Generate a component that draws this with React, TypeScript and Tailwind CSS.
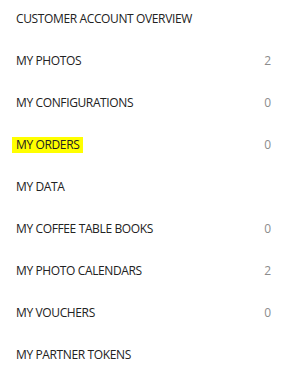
import React from "react";

const items: { label: string; count?: number; highlight?: boolean }[] = [
  { label: "CUSTOMER ACCOUNT OVERVIEW" },
  { label: "MY PHOTOS", count: 2 },
  { label: "MY CONFIGURATIONS", count: 0 },
  { label: "MY ORDERS", count: 0, highlight: true },
  { label: "MY DATA" },
  { label: "MY COFFEE TABLE BOOKS", count: 0 },
  { label: "MY PHOTO CALENDARS", count: 2 },
  { label: "MY VOUCHERS", count: 0 },
  { label: "MY PARTNER TOKENS" },
];

export default function App() {
  return (
    <div
      className="w-[287px] h-[366px] bg-white overflow-hidden"
      style={{ fontFamily: '"Open Sans", "Noto Sans", sans-serif' }}
    >
      <ul className="-mt-[2px] flex flex-col">
        {items.map((it) => (
          <li
            key={it.label}
            className="h-[42px] flex items-center justify-between pl-[16px] pr-[16px] text-[12px] leading-[16px] text-[#222]"
          >
            <span
              className={
                it.highlight
                  ? "bg-[#ffff00] -ml-[4px] px-[4px] tracking-[-0.37px]"
                  : "tracking-[-0.37px]"
              }
            >
              {it.label}
            </span>
            {it.count !== undefined && (
              <span className="text-[#8c8c8c]">{it.count}</span>
            )}
          </li>
        ))}
      </ul>
    </div>
  );
}
